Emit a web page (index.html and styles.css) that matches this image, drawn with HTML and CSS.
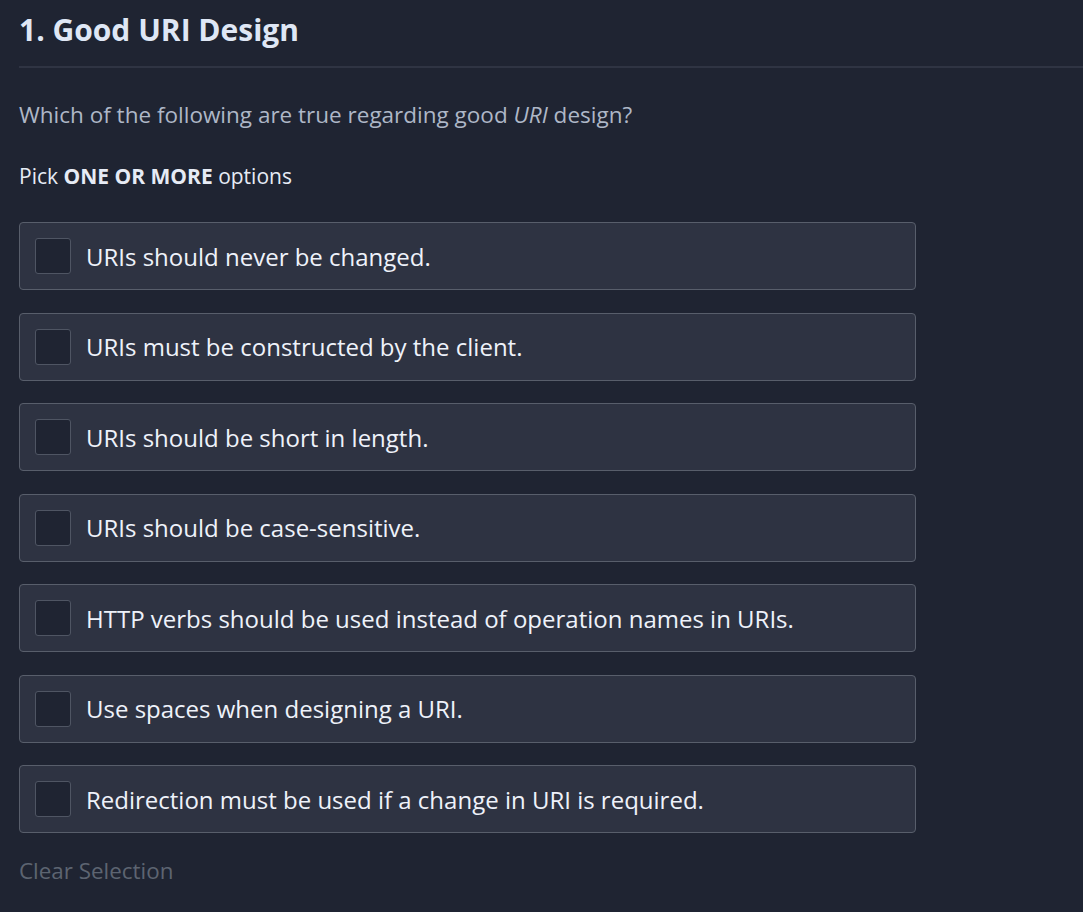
FILE: index.html
```html
<!DOCTYPE html>
<html>
<head>
<meta charset="utf-8">
<link rel="stylesheet" href="styles.css">
</head>
<body>
<div class="page">
  <h1 class="title">1. Good URI Design</h1>
  <div class="divider"></div>
  <p class="question">Which of the following are true regarding good <em>URI</em> design?</p>
  <p class="pick">Pick <strong>ONE OR MORE</strong> options</p>
  <div class="options">
    <label class="option"><span class="box"></span><span class="label">URIs should never be changed.</span></label>
    <label class="option"><span class="box"></span><span class="label">URIs must be constructed by the client.</span></label>
    <label class="option"><span class="box"></span><span class="label">URIs should be short in length.</span></label>
    <label class="option"><span class="box"></span><span class="label">URIs should be case-sensitive.</span></label>
    <label class="option"><span class="box"></span><span class="label">HTTP verbs should be used instead of operation names in URIs.</span></label>
    <label class="option"><span class="box"></span><span class="label">Use spaces when designing a URI.</span></label>
    <label class="option"><span class="box"></span><span class="label">Redirection must be used if a change in URI is required.</span></label>
  </div>
  <div class="clear">Clear Selection</div>
</div>
</body>
</html>
```
FILE: styles.css
```css
html, body {
  margin: 0;
  padding: 0;
  background: #1f2432;
  height: 100%;
}
body {
  font-family: "Open Sans", "Noto Sans", sans-serif;
  color: #e6ebf5;
}
.page {
  padding: 10px 0 0 19px;
}
.title {
  margin: 0;
  font-size: 30px;
  font-weight: 700;
  line-height: 40px;
  color: #dfe7f5;
}
.divider {
  margin-top: 16px;
  height: 2px;
  background: #2f3443;
}
.question {
  margin: 31px 0 0 0;
  font-size: 22.5px;
  line-height: 32px;
  color: #aeb7c7;
}
.question em {
  font-style: italic;
}
.pick {
  margin: 30px 0 0 0;
  font-size: 21px;
  line-height: 30px;
  color: #e6ebf5;
}
.pick strong {
  font-weight: 700;
}
.options {
  margin-top: 31px;
  width: 897px;
  display: flex;
  flex-direction: column;
  gap: 22.5px;
}
.option {
  box-sizing: border-box;
  height: 68px;
  display: flex;
  align-items: center;
  gap: 15px;
  padding: 0 15px;
  background: #2e3342;
  border: 1px solid #585e6b;
  border-radius: 4px;
}
.box {
  box-sizing: border-box;
  width: 36px;
  height: 36px;
  flex: none;
  background: #1f2432;
  border: 1px solid #4f5563;
  border-radius: 3px;
}
.label {
  font-size: 24px;
  color: #eef2fa;
}
.clear {
  margin-top: 23px;
  font-size: 22.4px;
  line-height: 30px;
  color: #5d6471;
}
```
